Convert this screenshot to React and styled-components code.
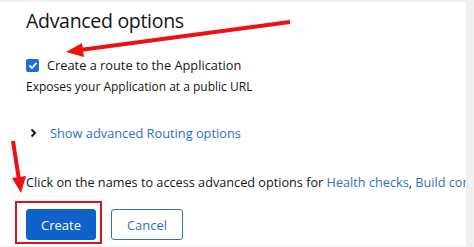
import React from 'react';
import styled, { createGlobalStyle } from 'styled-components';

const GlobalStyle = createGlobalStyle`
  html, body { margin: 0; padding: 0; background: #f0f0f0; }
  body { font-family: "Open Sans", "Noto Sans", sans-serif; color: #151515; }
`;

const Frame = styled.div`
  position: relative;
  width: 466px;
  height: 244px;
  margin-top: 2px;
  background: #fff;
  overflow: hidden;
`;

const Section = styled.div`
  padding: 6px 0 0 26px;
  white-space: nowrap;
`;

const Title = styled.h2`
  margin: 0;
  font-size: 19.5px;
  font-weight: 500;
  line-height: 26px;
  letter-spacing: -0.3px;
`;

const CheckRow = styled.label`
  display: flex;
  align-items: center;
  gap: 8px;
  margin-top: 21px;
  font-size: 12.8px;
  line-height: 20px;
`;

const Box = styled.span`
  display: inline-flex;
  align-items: center;
  justify-content: center;
  width: 13px;
  height: 13px;
  border-radius: 2px;
  background: #1a6fd6;
`;

const Helper = styled.p`
  margin: 3px 0 0;
  font-size: 12px;
  line-height: 18px;
`;

const Toggle = styled.div`
  display: flex;
  align-items: center;
  gap: 13px;
  margin: 27px 0 0 4px;
  font-size: 12.8px;
  line-height: 20px;
`;

const Link = styled.span`
  color: #2b6fc7;
`;

const Note = styled.p`
  margin: 29px 0 0;
  font-size: 12.7px;
  line-height: 20px;
`;

const Actions = styled.div`
  display: flex;
  gap: 15px;
  margin-top: 17px;
`;

const Button = styled.button`
  height: 31px;
  padding: 0;
  border-radius: 3px;
  font-family: inherit;
  font-size: 13px;
  border: 1px solid ${({ $primary }) => ($primary ? '#0f62c9' : '#2b6fc7')};
  background: ${({ $primary }) => ($primary ? '#0f62c9' : '#fff')};
  color: ${({ $primary }) => ($primary ? '#fff' : '#2b6fc7')};
  width: ${({ $w }) => $w}px;
`;

const Highlight = styled.div`
  position: absolute;
  left: 15px;
  top: 199px;
  width: 83px;
  height: 39px;
  border: 2px solid #d7141a;
`;

const Overlay = styled.svg`
  position: absolute;
  left: 0;
  top: 0;
  pointer-events: none;
`;

export default function App() {
  return (
    <>
      <GlobalStyle />
      <Frame>
        <Section>
          <Title>Advanced options</Title>
          <CheckRow>
            <Box>
              <svg width="10" height="9" viewBox="0 0 10 9">
                <path d="M1.5 4.5 L4 7 L8.5 1.8" fill="none" stroke="#fff" strokeWidth="1.8" />
              </svg>
            </Box>
            Create a route to the Application
          </CheckRow>
          <Helper>Exposes your Application at a public URL</Helper>
          <Toggle>
            <svg width="7" height="10" viewBox="0 0 7 10">
              <path d="M1.5 1.5 L5 5 L1.5 8.5" fill="none" stroke="#151515" strokeWidth="2" />
            </svg>
            <Link>Show advanced Routing options</Link>
          </Toggle>
          <Note>
            Click on the names to access advanced options for <Link>Health checks</Link>, <Link>Build configuration</Link>
          </Note>
          <Actions>
            <Button $primary $w={70}>Create</Button>
            <Button $w={72}>Cancel</Button>
          </Actions>
        </Section>
        <Highlight />
        <Overlay width="466" height="244" viewBox="0 0 466 244">
          <path d="M290 20 L80 48" stroke="#ee1111" strokeWidth="4" />
          <path d="M66 50 L82 41 L84 55 Z" fill="#ee1111" />
          <path d="M13 139 L19 178" stroke="#ee1111" strokeWidth="4" />
          <path d="M21 191 L12 176 L26 174 Z" fill="#ee1111" />
        </Overlay>
      </Frame>
    </>
  );
}
